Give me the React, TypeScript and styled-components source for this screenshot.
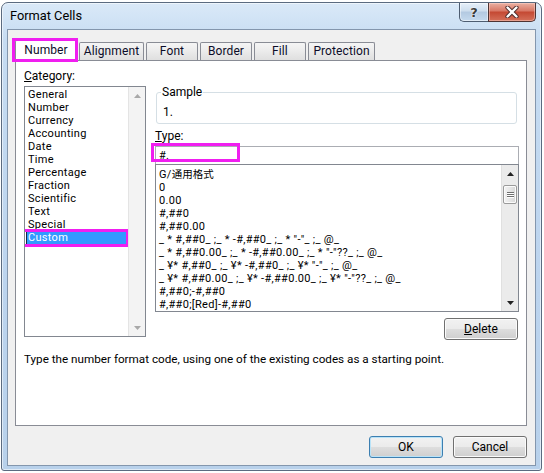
import React from "react";
import styled, { createGlobalStyle, css } from "styled-components";

const GlobalStyle = createGlobalStyle`
  html, body { margin: 0; padding: 0; background: #ffffff; }
  body {
    font-family: Roboto, "Noto Sans CJK SC", sans-serif;
    font-size: 11.5px;
    color: #000;
  }
  * { box-sizing: border-box; }
`;

const Window = styled.div`
  margin: 2px 0 0 1px;
  width: 541px;
  height: 469px;
  border: 1px solid #5b6b80;
  border-radius: 7px 7px 3px 3px;
  background: linear-gradient(180deg, #dae9f8 0%, #c6dcf2 8%, #bcd4ee 60%, #b8d1eb 100%);
  box-shadow: inset 0 0 0 1px rgba(255, 255, 255, 0.55);
  padding: 0 5px 4px 5px;
  display: flex;
  flex-direction: column;
`;

const TitleBar = styled.div`
  height: 26px;
  display: flex;
  align-items: flex-start;
`;

const Title = styled.div`
  flex: 1;
  height: 26px;
  line-height: 26px;
  padding-left: 3px;
  font-size: 12.8px;
  color: #000;
`;

const CaptionButtons = styled.div`
  display: flex;
`;

const HelpButton = styled.div`
  width: 29px;
  height: 19px;
  border: 1px solid #4e5d71;
  border-top: none;
  border-right: none;
  border-radius: 0 0 0 5px;
  background: linear-gradient(180deg, #e6f0fa 0%, #cddded 45%, #b3c9e1 50%, #c5daee 100%);
  box-shadow: inset 0 0 0 1px rgba(255, 255, 255, 0.5);
  display: flex;
  align-items: center;
  justify-content: center;
  font-family: "DejaVu Sans", sans-serif;
  font-weight: bold;
  font-size: 13px;
  line-height: 15px;
  color: #3b3b3b;
  text-shadow: 0 0 1px #fff, 0 0 2px #fff;
`;

const CloseButton = styled.div`
  width: 48px;
  height: 19px;
  border: 1px solid #4e3434;
  border-top: none;
  border-radius: 0 0 5px 0;
  background: linear-gradient(180deg, #eab0a2 0%, #d97a68 42%, #c54a34 52%, #d4705a 100%);
  box-shadow: inset 0 0 0 1px rgba(255, 220, 210, 0.45);
  display: flex;
  align-items: center;
  justify-content: center;
`;

const Client = styled.div`
  flex: 1;
  border: 1px solid #8396ad;
  background: #f0f0f0;
  padding: 10px 8px 0 7px;
  display: flex;
  flex-direction: column;
`;

const TabStrip = styled.div`
  height: 20px;
  display: flex;
  align-items: flex-end;
  gap: 2px;
`;

const Tab = styled.div<{ $w: number; $active?: boolean }>`
  position: relative;
  width: ${(p) => p.$w}px;
  height: 18px;
  border: 1px solid #898c95;
  border-bottom: none;
  border-radius: 2px 2px 0 0;
  background: linear-gradient(180deg, #f5f5f5 0%, #ebebeb 50%, #dfdfdf 100%);
  display: flex;
  align-items: center;
  justify-content: center;
  padding-bottom: 1px;
  color: #0c0c28;
  font-size: 12px;
  letter-spacing: 0.1px;
  ${(p) =>
    p.$active &&
    css`
      height: 21px;
      margin-bottom: -1px;
      background: #ffffff;
      z-index: 1;
      padding-bottom: 2px;
    `}
`;

const Mark = styled.div<{ $l: number; $t: number; $w: number; $h: number }>`
  position: absolute;
  left: ${(p) => p.$l}px;
  top: ${(p) => p.$t}px;
  width: ${(p) => p.$w}px;
  height: ${(p) => p.$h}px;
  border: 3px solid #f01ef0;
  pointer-events: none;
  z-index: 5;
`;

const Panel = styled.div`
  height: 366px;
  border: 1px solid #898c95;
  background: #ffffff;
  padding: 8px 6px 0 8px;
  display: flex;
  flex-direction: column;
`;

const Columns = styled.div`
  display: flex;
`;

const LeftCol = styled.div`
  width: 122px;
  display: flex;
  flex-direction: column;
`;

const RightCol = styled.div`
  width: 364px;
  margin-left: 9px;
  display: flex;
  flex-direction: column;
`;

const Label = styled.div<{ $mt?: number }>`
  line-height: 15px;
  height: 15px;
  margin-top: ${(p) => p.$mt ?? 0}px;
  white-space: nowrap;
  font-size: 12px;
`;

const ListBox = styled.div<{ $h: number; $mt: number }>`
  position: relative;
  height: ${(p) => p.$h}px;
  margin-top: ${(p) => p.$mt}px;
  border: 1px solid #828790;
  background: #ffffff;
  display: flex;
`;

const Items = styled.div<{ $pt: number }>`
  flex: 1;
  min-width: 0;
  padding: ${(p) => p.$pt}px 0 0 1px;
  overflow: hidden;
`;

const Item = styled.div<{ $selected?: boolean }>`
  position: relative;
  height: 13px;
  line-height: 13px;
  font-size: 11px;
  letter-spacing: 0.3px;
  padding-left: 2px;
  white-space: nowrap;
  ${(p) =>
    p.$selected &&
    css`
      background: #3399ff;
      color: #ffffff;
      box-shadow: inset 1px 0 0 #1a2a40;
    `}
`;

const Cjk = styled.span`
  display: inline-block;
  position: relative;
  top: -1.5px;
  height: 13px;
  line-height: 13px;
  vertical-align: top;
  font-family: "Noto Sans CJK SC", sans-serif;
  font-size: 10.5px;
  letter-spacing: 0;
`;

const ScrollBar = styled.div<{ $disabled?: boolean }>`
  width: 17px;
  display: flex;
  flex-direction: column;
  background: ${(p) => (p.$disabled ? "#f3f3f3" : "#ebebeb")};
  border-left: 1px solid ${(p) => (p.$disabled ? "#e4e4e4" : "#e0e0e0")};
`;

const ArrowBox = styled.div`
  height: 17px;
  display: flex;
  align-items: center;
  justify-content: center;
`;

const Track = styled.div`
  flex: 1;
  position: relative;
  padding: 1px 1px 0 1px;
`;

const Thumb = styled.div`
  height: 19px;
  margin-top: 2px;
  border: 1px solid #9a9a9a;
  border-radius: 2px;
  background: linear-gradient(90deg, #f3f3f3 0%, #e6e6e6 50%, #d8d8d8 100%);
  box-shadow: inset 0 0 0 1px #fbfbfb;
  display: flex;
  flex-direction: column;
  align-items: center;
  justify-content: center;
  gap: 1px;
`;

const Grip = styled.div`
  width: 7px;
  height: 1px;
  background: #6f6f6f;
  box-shadow: 0 1px 0 #ffffff;
`;

const Group = styled.fieldset`
  margin: 17px 2px 0 1px;
  height: 38px;
  border: 1px solid #d5dfe5;
  border-radius: 3px;
  padding: 0 4px;
  min-width: 0;
`;

const Legend = styled.legend`
  padding: 0 1px;
  line-height: 13px;
  font-size: 12px;
`;

const SampleValue = styled.div`
  margin-top: 6px;
  padding-left: 2px;
  line-height: 15px;
  font-size: 12px;
`;

const TextBox = styled.div`
  position: relative;
  height: 18px;
  margin-top: 2px;
  border: 1px solid #abadb3;
  border-bottom: none;
  background: #ffffff;
  padding-left: 3px;
  line-height: 17px;
  font-size: 11px;
  letter-spacing: 0.3px;
`;

const Button = styled.div<{ $default?: boolean }>`
  width: 74px;
  height: 22px;
  border: 1px solid #707070;
  border-radius: 3px;
  background: linear-gradient(180deg, #f2f2f2 0%, #ebebeb 48%, #dddddd 52%, #cfcfcf 100%);
  box-shadow: inset 0 0 0 1px #fbfbfb;
  display: flex;
  align-items: center;
  justify-content: center;
  padding-bottom: 1px;
  color: #000;
  font-size: 12px;
  ${(p) =>
    p.$default &&
    css`
      border-color: #3c7fb1;
      box-shadow: inset 0 0 0 1px #b9e3f8;
    `}
`;

const DeleteRow = styled.div`
  display: flex;
  justify-content: flex-end;
  margin-top: 6px;
  padding-right: 1px;
`;

const HelpText = styled.div`
  margin-top: 12px;
  line-height: 15px;
  white-space: nowrap;
  font-size: 11.7px;
`;

const Footer = styled.div`
  display: flex;
  justify-content: flex-end;
  gap: 10px;
  margin-top: 10px;
`;

const Arrow = ({ dir, color }: { dir: "up" | "down"; color: string }) => (
  <svg width="7" height="4" viewBox="0 0 7 4">
    {dir === "up" ? (
      <polygon points="3.5,0 7,4 0,4" fill={color} />
    ) : (
      <polygon points="0,0 7,0 3.5,4" fill={color} />
    )}
  </svg>
);

const categories = [
  "General",
  "Number",
  "Currency",
  "Accounting",
  "Date",
  "Time",
  "Percentage",
  "Fraction",
  "Scientific",
  "Text",
  "Special",
  "Custom",
];

const formats = [
  "0",
  "0.00",
  "#,##0",
  "#,##0.00",
  '_ * #,##0_ ;_ * -#,##0_ ;_ * "-"_ ;_ @_',
  '_ * #,##0.00_ ;_ * -#,##0.00_ ;_ * "-"??_ ;_ @_',
  '_ ¥* #,##0_ ;_ ¥* -#,##0_ ;_ ¥* "-"_ ;_ @_',
  '_ ¥* #,##0.00_ ;_ ¥* -#,##0.00_ ;_ ¥* "-"??_ ;_ @_',
  "#,##0;-#,##0",
  "#,##0;[Red]-#,##0",
];

const tabs: { label: string; w: number }[] = [
  { label: "Number", w: 62 },
  { label: "Alignment", w: 65 },
  { label: "Font", w: 52 },
  { label: "Border", w: 52 },
  { label: "Fill", w: 52 },
  { label: "Protection", w: 67 },
];

export default function App() {
  return (
    <>
      <GlobalStyle />
      <Window>
        <TitleBar>
          <Title>Format Cells</Title>
          <CaptionButtons>
            <HelpButton>?</HelpButton>
            <CloseButton>
              <svg width="14" height="12" viewBox="0 0 14 12">
                <path d="M2.5 1.5 L11.5 10.5 M11.5 1.5 L2.5 10.5" stroke="#4a2a2a" strokeWidth="4.2" strokeLinecap="round" />
                <path d="M2.5 1.5 L11.5 10.5 M11.5 1.5 L2.5 10.5" stroke="#ffffff" strokeWidth="2.4" strokeLinecap="round" />
              </svg>
            </CloseButton>
          </CaptionButtons>
        </TitleBar>
        <Client>
          <TabStrip>
            {tabs.map((t, i) => (
              <Tab key={t.label} $w={t.w} $active={i === 0}>
                {t.label}
                {i === 0 && <Mark $l={-4} $t={-3} $w={66} $h={24} />}
              </Tab>
            ))}
          </TabStrip>
          <Panel>
            <Columns>
              <LeftCol>
                <Label>
                  <u>C</u>ategory:
                </Label>
                <ListBox $h={251} $mt={2}>
                  <Items $pt={1}>
                    {categories.map((c) => (
                      <Item key={c} $selected={c === "Custom"}>
                        {c}
                        {c === "Custom" && <Mark $l={-5} $t={-2} $w={108} $h={18} />}
                      </Item>
                    ))}
                  </Items>
                  <ScrollBar $disabled>
                    <ArrowBox>
                      <Arrow dir="up" color="#a8a8a8" />
                    </ArrowBox>
                    <Track />
                    <ArrowBox>
                      <Arrow dir="down" color="#a8a8a8" />
                    </ArrowBox>
                  </ScrollBar>
                </ListBox>
              </LeftCol>
              <RightCol>
                <Group>
                  <Legend>Sample</Legend>
                  <SampleValue>1.</SampleValue>
                </Group>
                <Label $mt={5}>
                  <u>T</u>ype:
                </Label>
                <TextBox>
                  #.
                  <Mark $l={-5} $t={-4} $w={89} $h={19} />
                </TextBox>
                <ListBox $h={148} $mt={0}>
                  <Items $pt={3}>
                    <Item>
                      G/<Cjk>通用格式</Cjk>
                    </Item>
                    {formats.map((f, i) => (
                      <Item key={i}>{f}</Item>
                    ))}
                  </Items>
                  <ScrollBar>
                    <ArrowBox>
                      <Arrow dir="up" color="#222" />
                    </ArrowBox>
                    <Track>
                      <Thumb>
                        <Grip />
                        <Grip />
                        <Grip />
                      </Thumb>
                    </Track>
                    <ArrowBox>
                      <Arrow dir="down" color="#222" />
                    </ArrowBox>
                  </ScrollBar>
                </ListBox>
                <DeleteRow>
                  <Button>
                    <u>D</u>elete
                  </Button>
                </DeleteRow>
              </RightCol>
            </Columns>
            <HelpText>
              Type the number format code, using one of the existing codes as a starting point.
            </HelpText>
          </Panel>
          <Footer>
            <Button $default>OK</Button>
            <Button>Cancel</Button>
          </Footer>
        </Client>
      </Window>
    </>
  );
}
